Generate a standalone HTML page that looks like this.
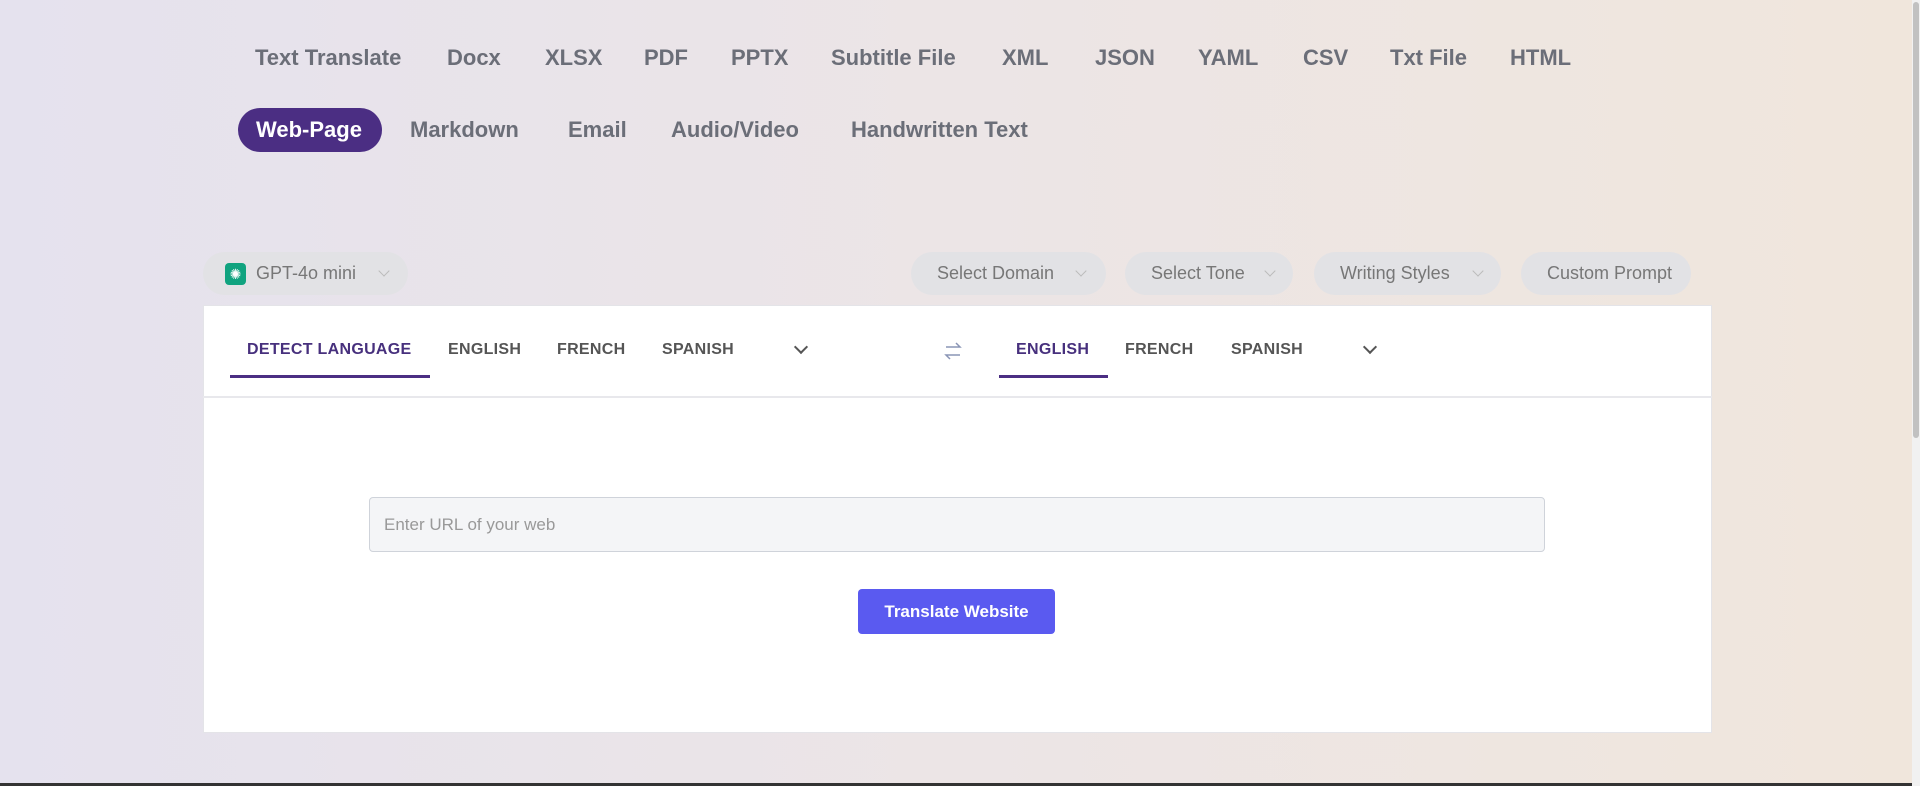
<!DOCTYPE html>
<html><head><meta charset="utf-8"><style>
*{margin:0;padding:0;box-sizing:border-box}
body{width:1920px;height:786px;overflow:hidden;position:relative;font-family:"Liberation Sans",sans-serif;background:linear-gradient(90deg,#e5e2ee 0%,#ece5e6 50%,#f0e6dc 100%)}
.a{position:absolute;white-space:nowrap}
.nav{font-size:22px;font-weight:bold;color:#6b6e78;top:45px}
.nav2{top:117px}
.pill{position:absolute;background:#e2e2e5;border-radius:22px;height:43px;top:252px;font-size:18px;color:#777;line-height:43px;padding-left:26px}
.chev{position:absolute;width:8px;height:8px;border-right:1.5px solid #bbb;border-bottom:1.5px solid #bbb;transform:rotate(45deg)}
.tab{font-size:16px;font-weight:bold;color:#555;top:341px;letter-spacing:.3px}
.dk{width:10px;height:10px;border-right:2px solid #555;border-bottom:2px solid #555;transform:rotate(45deg);position:absolute}
</style></head><body>
<div class="a nav" style="left:255px">Text Translate</div>
<div class="a nav" style="left:447px">Docx</div>
<div class="a nav" style="left:545px">XLSX</div>
<div class="a nav" style="left:644px">PDF</div>
<div class="a nav" style="left:731px">PPTX</div>
<div class="a nav" style="left:831px">Subtitle File</div>
<div class="a nav" style="left:1002px">XML</div>
<div class="a nav" style="left:1095px">JSON</div>
<div class="a nav" style="left:1198px">YAML</div>
<div class="a nav" style="left:1303px">CSV</div>
<div class="a nav" style="left:1390px">Txt File</div>
<div class="a nav" style="left:1510px">HTML</div>
<div class="a" style="left:238px;top:108px;width:144px;height:44px;border-radius:22px;background:#4b2e83"></div>
<div class="a nav nav2" style="left:256px;color:#fff">Web-Page</div>
<div class="a nav nav2" style="left:410px">Markdown</div>
<div class="a nav nav2" style="left:568px">Email</div>
<div class="a nav nav2" style="left:671px">Audio/Video</div>
<div class="a nav nav2" style="left:851px">Handwritten Text</div>

<div class="pill" style="left:203px;width:205px;padding-left:53px">GPT-4o mini<div class="chev" style="left:177px;top:15px"></div></div>
<div class="a" style="left:225px;top:263px;width:21px;height:22px;border-radius:4px;background:#10a37f;color:#fff;font-size:14px;text-align:center;line-height:22px">✺</div>
<div class="pill" style="left:911px;width:195px">Select Domain<div class="chev" style="left:166px;top:15px"></div></div>
<div class="pill" style="left:1125px;width:168px">Select Tone<div class="chev" style="left:141px;top:15px"></div></div>
<div class="pill" style="left:1314px;width:187px">Writing Styles<div class="chev" style="left:160px;top:15px"></div></div>
<div class="pill" style="left:1521px;width:170px">Custom Prompt</div>

<div class="a" style="left:203px;top:305px;width:1509px;height:428px;background:#fff;border:1px solid #e4e4e8"></div>
<div class="a" style="left:203px;top:396px;width:1509px;height:2px;background:#e8e8ec"></div>
<div class="a tab" style="left:247px;color:#47307d">DETECT LANGUAGE</div>
<div class="a" style="left:230px;top:375px;width:200px;height:3px;background:#4b2e83"></div>
<div class="a tab" style="left:448px">ENGLISH</div>
<div class="a tab" style="left:557px">FRENCH</div>
<div class="a tab" style="left:662px">SPANISH</div>
<div class="dk" style="left:796px;top:342px"></div>
<svg class="a" style="left:941px;top:339px" width="24" height="24" viewBox="0 0 24 24" fill="none" stroke="#8a95b5" stroke-width="1.5"><path d="M5 8h14l-4-4M19 16H5l4 4"/></svg>
<div class="a tab" style="left:1016px;color:#47307d">ENGLISH</div>
<div class="a" style="left:999px;top:375px;width:109px;height:3px;background:#4b2e83"></div>
<div class="a tab" style="left:1125px">FRENCH</div>
<div class="a tab" style="left:1231px">SPANISH</div>
<div class="dk" style="left:1365px;top:342px"></div>

<div class="a" style="left:369px;top:497px;width:1176px;height:55px;background:#f4f5f7;border:1px solid #cfd3da;border-radius:4px;font-size:17px;color:#999;line-height:53px;padding-left:14px">Enter URL of your web</div>
<div class="a" style="left:858px;top:589px;width:197px;height:45px;background:#5a5af0;border-radius:4px;color:#fff;font-size:17px;font-weight:bold;text-align:center;line-height:45px">Translate Website</div>

<div class="a" style="left:1912px;top:0;width:8px;height:786px;background:#f1f1f1"></div>
<div class="a" style="left:1913px;top:2px;width:6px;height:436px;background:#c1c1c1;border-radius:3px"></div>
<div class="a" style="left:0;top:783px;width:1912px;height:3px;background:#333"></div>
</body></html>
